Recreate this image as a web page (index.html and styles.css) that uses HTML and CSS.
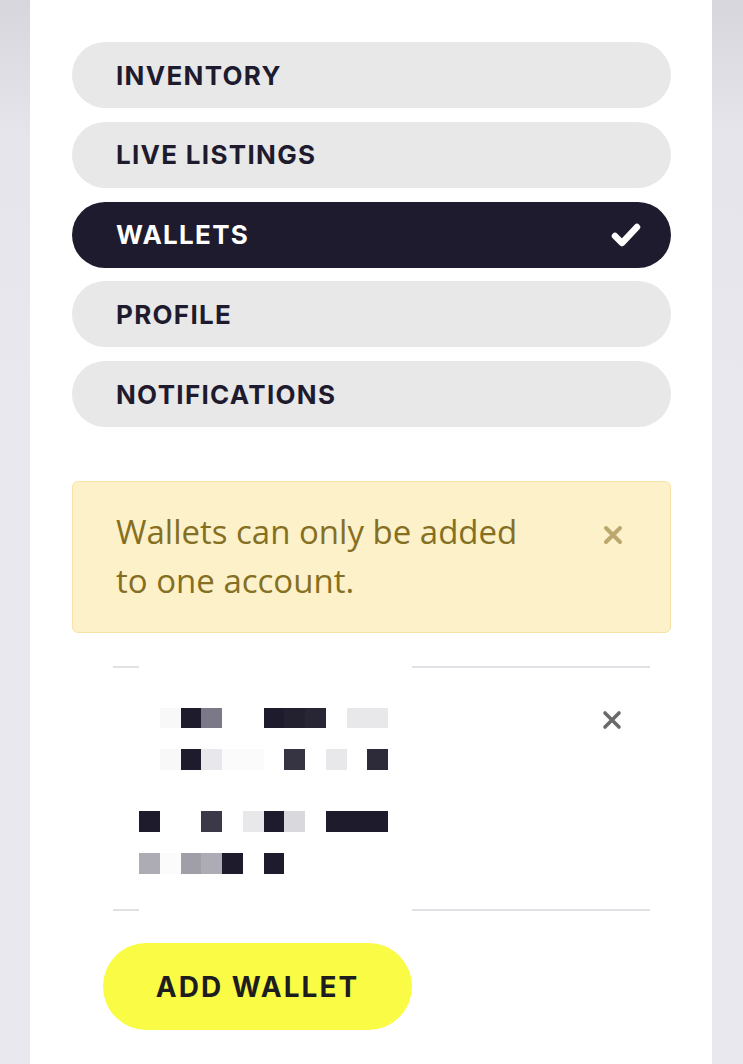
FILE: index.html
```html
<!DOCTYPE html>
<html lang="en">
<head>
<meta charset="utf-8">
<title>Wallets</title>
<link rel="stylesheet" href="styles.css">
</head>
<body>
<div class="panel">
  <nav class="menu">
    <a class="pill">INVENTORY</a>
    <a class="pill">LIVE LISTINGS</a>
    <a class="pill active">WALLETS
      <svg class="check" viewBox="0 0 30 24" width="30" height="24" aria-hidden="true">
        <polyline points="4,13 11,20 26,4" fill="none" stroke="#fff" stroke-width="6.5" stroke-linecap="round" stroke-linejoin="round"/>
      </svg>
    </a>
    <a class="pill">PROFILE</a>
    <a class="pill">NOTIFICATIONS</a>
  </nav>

  <div class="alert">
    <p class="alert-text">Wallets can only be added to one account.</p>
    <svg class="alert-close" viewBox="0 0 22 22" width="22" height="22" aria-hidden="true">
      <path d="M4 4 L18 18 M18 4 L4 18" stroke="#bca86e" stroke-width="4" stroke-linecap="round"/>
    </svg>
  </div>

  <div class="wallet">
    <div class="wallet-edge"></div>
    <div class="mosaic">
      <div class="mrow"></div>
      <div class="mrow"></div>
      <div class="mrow">
        <span class="c"></span><span class="c fa"></span><span class="c d1"></span><span class="c g1"></span>
        <span class="c"></span><span class="c"></span><span class="c d1"></span><span class="c d2"></span>
        <span class="c d3"></span><span class="c"></span><span class="c l1"></span><span class="c l1"></span>
      </div>
      <div class="mrow"></div>
      <div class="mrow">
        <span class="c"></span><span class="c fa"></span><span class="c d1"></span><span class="c l2"></span>
        <span class="c fb"></span><span class="c fb"></span><span class="c"></span><span class="c d4"></span>
        <span class="c"></span><span class="c l1"></span><span class="c"></span><span class="c d5"></span>
      </div>
      <div class="mrow"></div>
      <div class="mrow"></div>
      <div class="mrow">
        <span class="c d1"></span><span class="c"></span><span class="c"></span><span class="c d6"></span>
        <span class="c"></span><span class="c l1"></span><span class="c d1"></span><span class="c l3"></span>
        <span class="c"></span><span class="c d1"></span><span class="c d1"></span><span class="c d1"></span>
      </div>
      <div class="mrow"></div>
      <div class="mrow">
        <span class="c g2"></span><span class="c fb"></span><span class="c g3"></span><span class="c g2"></span>
        <span class="c d1"></span><span class="c"></span><span class="c d1"></span>
      </div>
      <div class="mrow"></div>
      <div class="mrow"></div>
    </div>
    <div class="wallet-side">
      <svg class="wallet-close" viewBox="0 0 22 22" width="22" height="22" aria-hidden="true">
        <path d="M4 4 L18 18 M18 4 L4 18" stroke="#6a6a6c" stroke-width="3.6" stroke-linecap="round"/>
      </svg>
    </div>
  </div>

  <button class="add-btn" type="button">ADD WALLET</button>
</div>
</body>
</html>
```

FILE: styles.css
```css
html, body {
  margin: 0;
  padding: 0;
}

body {
  background: linear-gradient(180deg, #d6d6dc 0px, #e6e5eb 140px, #e9e8ee 400px);
  min-height: 1064px;
  font-family: "Inter", "Liberation Sans", sans-serif;
}

.panel {
  background: #ffffff;
  margin: 0 31px 0 30px;
  padding: 42px 41px 40px 42px;
  min-height: 1064px;
  box-sizing: border-box;
}

.menu {
  display: flex;
  flex-direction: column;
  gap: 13.75px;
}

.pill {
  display: flex;
  align-items: center;
  justify-content: space-between;
  height: 66px;
  border-radius: 33px;
  background: #e8e8e9;
  color: #1e1b2e;
  padding: 0 30px 0 44px;
  font-size: 26px;
  font-weight: 700;
  letter-spacing: 1.3px;
}

.pill.active {
  background: #1e1b2e;
  color: #ffffff;
}

.check {
  display: block;
}

.alert {
  margin-top: 54px;
  background: #fdf1c9;
  border: 1px solid #f5e3a7;
  border-radius: 6px;
  padding: 25px 46px 27px 43px;
  display: flex;
  align-items: flex-start;
  justify-content: space-between;
}

.alert-text {
  margin: 0;
  width: 420px;
  font-family: "Open Sans", "Liberation Sans", sans-serif;
  font-size: 33px;
  line-height: 49px;
  color: #856f22;
}

.alert-close {
  display: block;
  margin-top: 17px;
}

.wallet {
  display: flex;
  margin: 33px 21px 0 41px;
  height: 245px;
}

.wallet-edge {
  width: 26px;
  border-top: 2px solid #e1e1e5;
  border-bottom: 2px solid #e1e1e5;
}

.mosaic {
  width: 273px;
  height: 245px;
  overflow: hidden;
  display: flex;
  flex-direction: column;
}

.mrow {
  display: flex;
  height: 20.75px;
  flex: none;
}

.c {
  width: 20.75px;
  height: 20.75px;
  flex: none;
}

.fa { background: #f8f8f9; }
.fb { background: #fbfbfb; }
.d1 { background: #1e1c2c; }
.d2 { background: #232130; }
.d3 { background: #282635; }
.d4 { background: #363443; }
.d5 { background: #2d2b39; }
.d6 { background: #3b3948; }
.g1 { background: #7b7987; }
.g2 { background: #adacb4; }
.g3 { background: #a09fa7; }
.l1 { background: #e8e8eb; }
.l2 { background: #e8e8ec; }
.l3 { background: #d9d9dd; }

.wallet-side {
  flex: 1;
  border-top: 2px solid #e1e1e5;
  border-bottom: 2px solid #e1e1e5;
  display: flex;
  justify-content: flex-end;
  align-items: flex-start;
  padding: 41px 27px 0 0;
}

.wallet-close {
  display: block;
}

.add-btn {
  display: block;
  margin: 32px 0 0 31px;
  width: 309px;
  height: 87px;
  border: none;
  border-radius: 44px;
  background: #fafb45;
  color: #1d1d1f;
  font-family: "Inter", "Liberation Sans", sans-serif;
  font-size: 28px;
  font-weight: 700;
  letter-spacing: 2px;
  padding: 0;
}
```
